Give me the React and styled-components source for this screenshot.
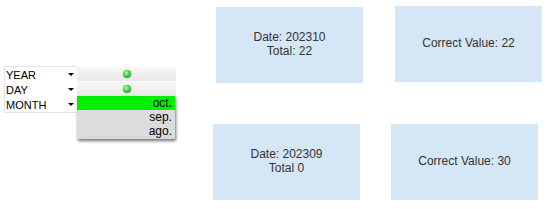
import React from "react";
import styled, { createGlobalStyle } from "styled-components";

const Global = createGlobalStyle`
  html, body { margin: 0; padding: 0; background: #ffffff; }
  body { font-family: "Liberation Sans", Arial, sans-serif; }
`;

const Page = styled.div`
  display: flex;
  align-items: flex-start;
  width: 547px;
  height: 209px;
  overflow: hidden;
`;

const FilterPanel = styled.div`
  position: relative;
  margin: 66px 0 0 4px;
  display: flex;
  width: 172px;
`;

const LabelColumn = styled.div`
  display: flex;
  flex-direction: column;
  width: 72px;
  border: 1px solid #e4e4e4;
  border-right: none;
  background: #fff;
`;

const LabelRow = styled.div`
  height: 15px;
  display: flex;
  align-items: center;
  justify-content: space-between;
  padding: 0 2px 0 1px;
  font-size: 11px;
  color: #000;
`;

const Arrow = styled.span`
  width: 0;
  height: 0;
  margin-right: 1px;
  border-left: 3px solid transparent;
  border-right: 3px solid transparent;
  border-top: 3px solid #000;
`;

const ValueColumn = styled.div`
  display: flex;
  flex-direction: column;
  width: 99px;
  padding-top: 1px;
`;

const ValueCell = styled.div`
  height: 14px;
  display: flex;
  align-items: center;
  justify-content: center;
  background: linear-gradient(#f7f7f7, #e9e9e9);
  border-bottom: 1px solid #fdfdfd;
`;

const Dot = styled.span`
  width: 8px;
  height: 8px;
  border-radius: 50%;
  background: radial-gradient(circle at 40% 35%, #b6ff9c 0%, #39d43a 45%, #138a16 100%);
  box-shadow: 0 0 1px rgba(0, 0, 0, 0.45);
`;

const Dropdown = styled.div`
  position: absolute;
  top: 30px;
  left: 73px;
  width: 98px;
  display: flex;
  flex-direction: column;
  background: #dcdcdc;
  box-shadow: 1px 2px 3px rgba(0, 0, 0, 0.55);
  padding-bottom: 1px;
`;

const Option = styled.div`
  height: 13px;
  display: flex;
  align-items: center;
  justify-content: flex-end;
  padding-right: 3px;
  font-size: 12px;
  color: #000;
  background: ${(p) => (p.$selected ? "#00f000" : "transparent")};
  border-bottom: 1px solid ${(p) => (p.$selected ? "#00f000" : "#d6d6d6")};
`;

const CardGrid = styled.div`
  display: grid;
  grid-template-columns: 150px 151px;
  grid-template-rows: 77px 76px;
  column-gap: 28px;
  row-gap: 41px;
  margin: 6px 0 0 37px;
`;

const Card = styled.div`
  width: 147px;
  height: 76px;
  margin: ${(p) => p.$dy || 0}px 0 0 ${(p) => p.$dx || 0}px;
  background: #d5e6f7;
  display: flex;
  flex-direction: column;
  align-items: center;
  justify-content: center;
  font-size: 12px;
  line-height: 14px;
  color: #333;
  text-align: center;
  padding-bottom: 2px;
  box-sizing: border-box;
`;

const filters = [
  { label: "YEAR", dot: true },
  { label: "DAY", dot: true },
  { label: "MONTH", dot: false },
];

const months = [
  { name: "oct.", selected: true },
  { name: "sep.", selected: false },
  { name: "ago.", selected: false },
];

export default function App() {
  return (
    <>
      <Global />
      <Page>
        <FilterPanel>
          <LabelColumn>
            {filters.map((f) => (
              <LabelRow key={f.label}>
                <span>{f.label}</span>
                <Arrow />
              </LabelRow>
            ))}
          </LabelColumn>
          <ValueColumn>
            {filters
              .filter((f) => f.dot)
              .map((f) => (
                <ValueCell key={f.label}>
                  <Dot />
                </ValueCell>
              ))}
          </ValueColumn>
          <Dropdown>
            {months.map((m) => (
              <Option key={m.name} $selected={m.selected}>
                {m.name}
              </Option>
            ))}
          </Dropdown>
        </FilterPanel>
        <CardGrid>
          <Card $dx={3} $dy={1}>
            <div>Date: 202310</div>
            <div>Total: 22</div>
          </Card>
          <Card $dx={4}>
            <div>Correct Value: 22</div>
          </Card>
          <Card>
            <div>Date: 202309</div>
            <div>Total 0</div>
          </Card>
          <Card>
            <div>Correct Value: 30</div>
          </Card>
        </CardGrid>
      </Page>
    </>
  );
}
